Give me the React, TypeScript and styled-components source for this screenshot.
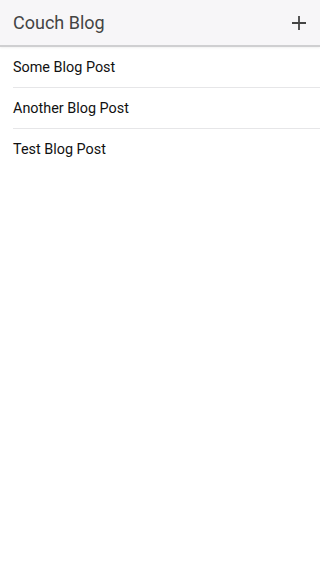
import styled, { createGlobalStyle } from 'styled-components';

const GlobalStyle = createGlobalStyle`
	html, body {
		margin: 0;
		padding: 0;
		background: #ffffff;
		font-family: Roboto, 'Noto Sans', sans-serif;
	}
`;

const Page = styled.div`
	width: 320px;
	height: 568px;
	background: #ffffff;
	overflow: hidden;
`;

const Header = styled.header`
	height: 45px;
	display: flex;
	align-items: center;
	justify-content: space-between;
	padding: 0 12px 0 13px;
	background: #f7f6f8;
	border-bottom: 2px solid #cfcfd1;
	box-shadow: 0 1px 2px rgba(0, 0, 0, 0.06);
`;

const Title = styled.h1`
	margin: 0;
	font-size: 18px;
	font-weight: 400;
	color: #444444;
`;

const AddButton = styled.button`
	border: none;
	background: none;
	padding: 0;
	width: 18px;
	height: 18px;
	display: flex;
	align-items: center;
	justify-content: center;
	color: #444444;
`;

const PostList = styled.ul`
	list-style: none;
	margin: 0;
	padding: 0;
`;

const PostItem = styled.li`
	margin-left: 13px;
	height: 40px;
	display: flex;
	align-items: center;
	font-size: 14.4px;
	color: #111111;
	border-bottom: 1px solid #e6e6e8;

	&:last-child {
		border-bottom: none;
	}
`;

const posts = ['Some Blog Post', 'Another Blog Post', 'Test Blog Post'];

function App() {
	return (
		<>
			<GlobalStyle />
			<Page>
				<Header>
					<Title>Couch Blog</Title>
					<AddButton aria-label="Add post">
						<svg width="16" height="16" viewBox="0 0 16 16">
							<path d="M8 1v14M1 8h14" stroke="currentColor" strokeWidth="1.8" />
						</svg>
					</AddButton>
				</Header>
				<PostList>
					{posts.map((post) => (
						<PostItem key={post}>{post}</PostItem>
					))}
				</PostList>
			</Page>
		</>
	);
}

export default App;
